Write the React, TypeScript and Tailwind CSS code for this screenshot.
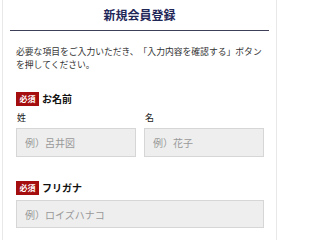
export default function App() {
  return (
    <div className="w-[280px] h-[240px] overflow-hidden bg-white font-['Noto_Sans_CJK_JP','Noto_Sans',sans-serif] text-[#222]">
      <div className="ml-[2px] mr-[3px] h-full border-x border-[#e8e8e8]">
        {/* Title */}
        <div className="mx-[7px] border-b border-[#3d4058] pt-[6px] pb-[6px] text-center text-[12px] font-bold leading-[18px] text-[#1f2759]">
          新規会員登録
        </div>

        <div className="pl-[13px] pr-[12px]">
          <p className="mt-[14px] mr-[-6px] text-[8.8px] leading-[13px] text-[#333] [text-spacing-trim:space-all]">
            必要な項目をご入力いただき、「入力内容を確認する」ボタンを押してください。
          </p>

          {/* Name */}
          <div className="mt-[21px] flex items-center gap-[3px]">
            <span className="w-[23px] h-[14px] bg-[#a50e0e] text-white text-[8px] font-bold leading-[14px] text-center">必須</span>
            <span className="text-[10px] font-bold leading-[14px] text-[#111]">お名前</span>
          </div>
          <div className="mt-[6px] grid grid-cols-2 gap-[8px]">
            <div>
              <div className="text-[9px] leading-[12px] pl-[1px]">姓</div>
              <input
                placeholder="例）呂井図"
                className="mt-[4px] w-full h-[29px] bg-[#eeeeee] border border-[#d6d6d6] pl-[8px] text-[10px] outline-none placeholder:text-[#999]"
              />
            </div>
            <div>
              <div className="text-[9px] leading-[12px] pl-[1px]">名</div>
              <input
                placeholder="例）花子"
                className="mt-[4px] w-full h-[29px] bg-[#eeeeee] border border-[#d6d6d6] pl-[8px] text-[10px] outline-none placeholder:text-[#999]"
              />
            </div>
          </div>

          {/* Furigana */}
          <div className="mt-[24px] flex items-center gap-[3px]">
            <span className="w-[23px] h-[14px] bg-[#a50e0e] text-white text-[8px] font-bold leading-[14px] text-center">必須</span>
            <span className="text-[10px] font-bold leading-[14px] text-[#111]">フリガナ</span>
          </div>
          <input
            placeholder="例）ロイズハナコ"
            className="mt-[5px] block w-full h-[28px] bg-[#eeeeee] border border-[#d6d6d6] pl-[8px] text-[10px] outline-none placeholder:text-[#999]"
          />
        </div>
      </div>
    </div>
  );
}
